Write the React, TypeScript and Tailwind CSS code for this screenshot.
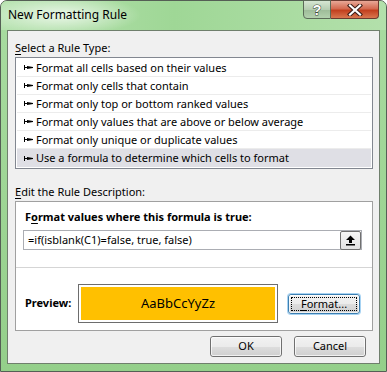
const ruleTypes = [
  "Format all cells based on their values",
  "Format only cells that contain",
  "Format only top or bottom ranked values",
  "Format only values that are above or below average",
  "Format only unique or duplicate values",
  "Use a formula to determine which cells to format",
];

function RuleArrow() {
  return (
    <svg width="10" height="7" viewBox="0 0 10 7" className="shrink-0">
      <rect x="0" y="1" width="1" height="5" fill="#000" />
      <rect x="0" y="3" width="9" height="1" fill="#000" />
      <polygon points="3,2 9,3 9,4 3,5" fill="#000" />
    </svg>
  );
}

function CollapseIcon() {
  return (
    <svg width="11" height="11" viewBox="0 0 11 11">
      <polygon points="5.5,0.5 10,5 7,5 7,8 4,8 4,5 1,5" fill="#000" />
      <rect x="1" y="9" width="9" height="1.5" fill="#000" />
    </svg>
  );
}

function DialogButton({ children, focused }: { children: React.ReactNode; focused?: boolean }) {
  return (
    <div
      className={
        "flex h-full w-full rounded-[3px] border " +
        (focused
          ? "border-[#3c7fb1] shadow-[0_0_0_1px_#a7d3f3]"
          : "border-[#707070]") +
        " bg-[linear-gradient(to_bottom,#f2f2f2_0%,#ebebeb_50%,#dddddd_51%,#cfcfcf_100%)]"
      }
    >
      <div className="flex flex-1 rounded-[2px] border border-white/70">
        <div
          className={
            "flex flex-1 items-center justify-center " +
            (focused ? "m-px border border-dotted border-black" : "")
          }
        >
          {children}
        </div>
      </div>
    </div>
  );
}

export default function App() {
  return (
    <div className="h-[372px] w-[387px] bg-white font-['Noto_Sans',sans-serif] text-[11px] text-black">
      <div className="flex h-[372px] w-[387px] flex-col rounded-t-[7px] border border-[#555f55] bg-[linear-gradient(to_bottom,#a9dca1,#94cf8a)] px-[6px] pb-[7px]">
        {/* title bar */}
        <div className="-mx-[6px] flex h-[29px] items-start rounded-t-[6px] bg-[radial-gradient(ellipse_80px_20px_at_60px_14px,rgba(255,255,255,0.75),rgba(255,255,255,0)),linear-gradient(to_right,#b6e2af,#9fd796_45%,#b3e0ab)] px-[7px]">
          <div className="mt-[6px] text-[12px] leading-[16px]">New Formatting Rule</div>
          <div className="-mt-px ml-auto flex">
            <div className="flex h-[19px] w-[28px] items-center justify-center rounded-bl-[4px] border border-[#5b6b58] bg-[linear-gradient(to_bottom,#d6e6d3,#b5cdb1_50%,#9dbb98_51%,#b3d0ae)]">
              <svg width="12" height="14" viewBox="0 0 12 14">
                <text x="6" y="12" textAnchor="middle" fontFamily="Liberation Sans, sans-serif" fontWeight="bold" fontSize="14" fill="#ffffff" stroke="#3a4a3a" strokeWidth="1" paintOrder="stroke">?</text>
              </svg>
            </div>
            <div className="flex h-[19px] w-[48px] items-center justify-center rounded-br-[4px] border border-l-0 border-[#6b3a30] bg-[linear-gradient(to_bottom,#e8a897,#d46a50_45%,#c2401f_55%,#d9774f)]">
              <svg width="16" height="12" viewBox="0 0 16 12">
                <path d="M3 1.5 L13 10.5 M13 1.5 L3 10.5" stroke="#3b1d17" strokeWidth="4.2" strokeLinecap="square" />
                <path d="M3 1.5 L13 10.5 M13 1.5 L3 10.5" stroke="#ffffff" strokeWidth="2.2" strokeLinecap="square" />
              </svg>
            </div>
          </div>
        </div>

        {/* client area */}
        <div className="flex flex-1 flex-col border border-[#6f7f6c] bg-[#f0f0f0] pl-[7px] pr-[6px] pt-[9px]">
          <div className="h-[15px] leading-[15px]">
            <span className="underline underline-offset-2">S</span>elect a Rule Type:
          </div>
          <div className="mt-[2px] h-[112px] border border-[#828790] bg-white p-px">
            {ruleTypes.map((r, i) => (
              <div
                key={r}
                className={
                  "flex h-[18px] items-center gap-[2px] pl-[7px] " +
                  (i === ruleTypes.length - 1
                    ? "bg-[#dfdfe5]"
                    : "border-b border-[#ececec]")
                }
              >
                <RuleArrow />
                <span className="leading-[16px]">{r}</span>
              </div>
            ))}
          </div>

          <div className="mt-[15px] h-[16px] leading-[16px]">
            <span className="underline underline-offset-2">E</span>dit the Rule Description:
          </div>
          <div className="mt-px flex h-[130px] flex-col border border-[#a0a0a0] bg-white">
            <div className="pl-[9px] pr-[10px] pt-[7px]">
              <div className="h-[15px] font-bold leading-[15px]">
                F<span className="underline underline-offset-2">o</span>rmat values where this formula is true:
              </div>
              <div className="ml-[-2px] mt-[6px] flex h-[20px] items-center border border-[#abadb3] pl-[4px]">
                <span className="flex-1 leading-[16px]">=if(isblank(C1)=false, true, false)</span>
                <div className="flex h-[19px] w-[21px] items-center justify-center rounded-[2px] border border-[#707070] bg-[linear-gradient(to_bottom,#f6f6f6,#e2e2e2)]">
                  <CollapseIcon />
                </div>
              </div>
            </div>
            <div className="mt-[17px] h-px bg-[#d5d5d5]" />
            <div className="flex items-center pb-[7px] pl-[9px] pt-[16px]">
              <div className="w-[53px] font-bold">Preview:</div>
              <div className="h-[39px] w-[200px] border border-[#6d6d6d] p-[2px]">
                <div className="flex h-full items-center justify-center bg-[#ffc000] text-[13px]">
                  AaBbCcYyZz
                </div>
              </div>
              <div className="ml-[10px] h-[20px] w-[72px]">
                <DialogButton focused>
                  <span className="leading-[13px]">
                    <span className="underline underline-offset-2">F</span>ormat...
                  </span>
                </DialogButton>
              </div>
            </div>
          </div>

          <div className="mt-[5px] flex justify-end gap-[12px] pr-[7px]">
            <div className="h-[21px] w-[72px]">
              <DialogButton>OK</DialogButton>
            </div>
            <div className="h-[21px] w-[72px]">
              <DialogButton>Cancel</DialogButton>
            </div>
          </div>
        </div>
      </div>
    </div>
  );
}
